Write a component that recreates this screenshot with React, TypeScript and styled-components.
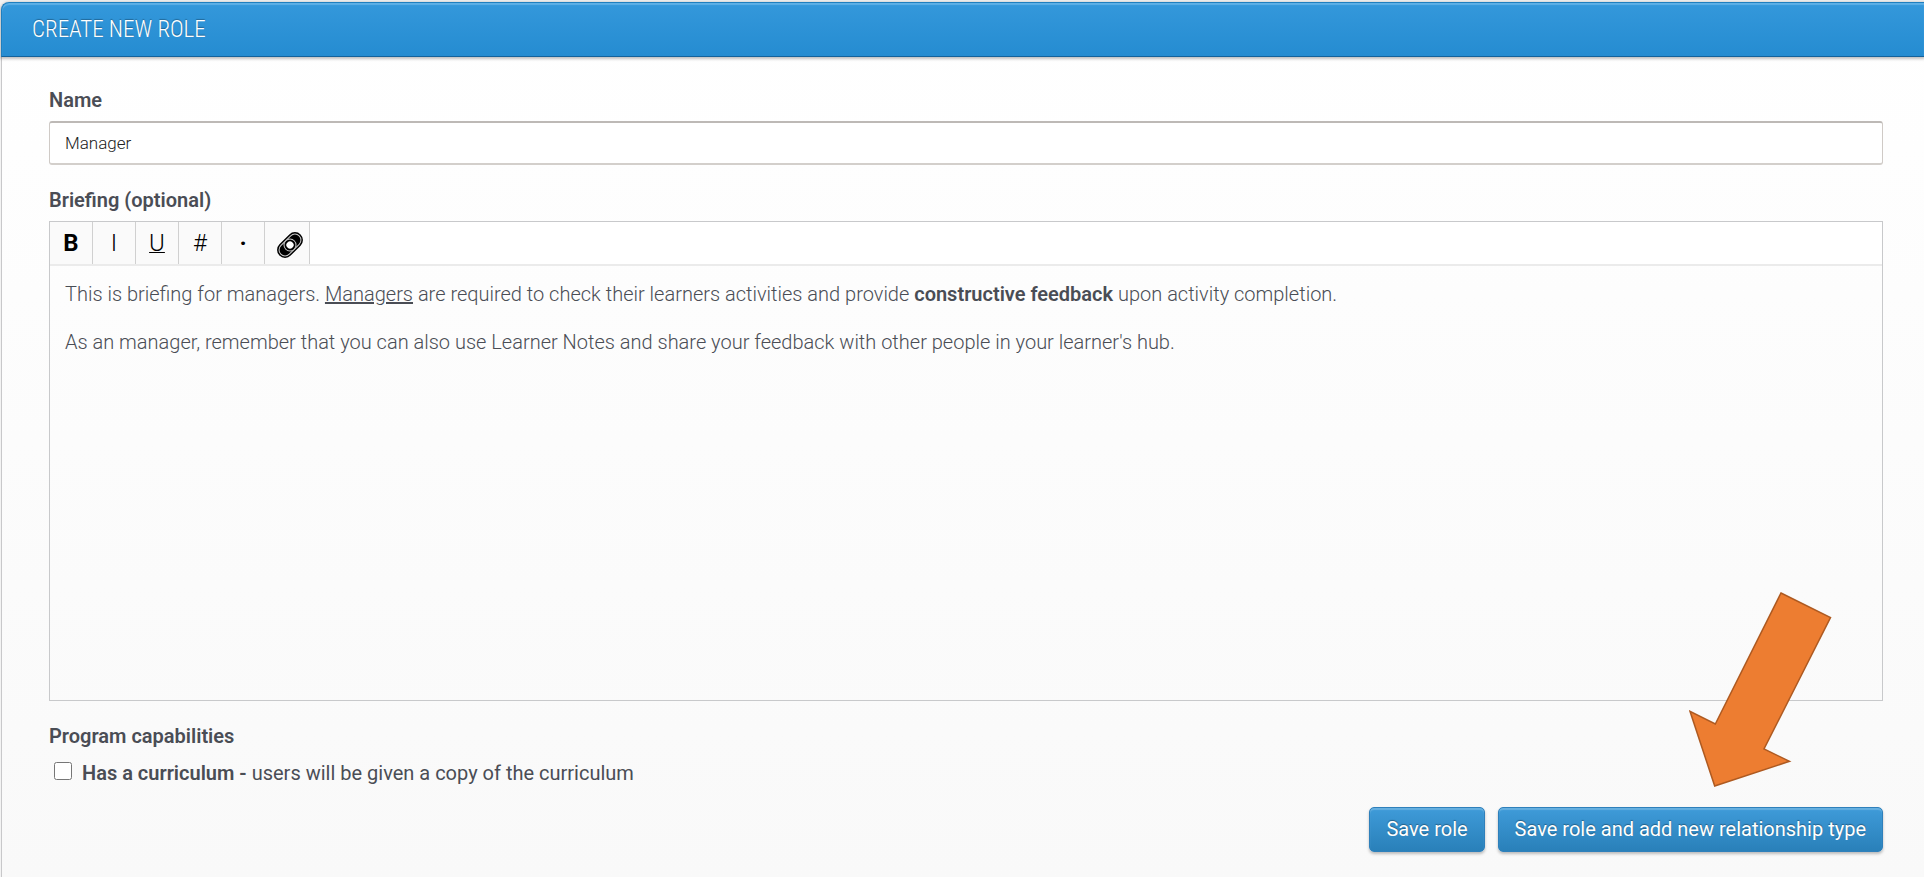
import React from 'react';
import styled, { createGlobalStyle } from 'styled-components';

const GlobalStyle = createGlobalStyle`
  * { box-sizing: border-box; }
  body {
    margin: 0;
    background: #f3f3f3;
    color: #4a4d55;
    font: 300 20px/24px Roboto, "Liberation Sans", sans-serif;
  }
`;

const Panel = styled.section`
  min-height: calc(100vh - 2px);
  margin: 2px 0 0 1px;
  border-left: 1px solid #c8c8ca;
  border-top-left-radius: 8px;
  background: linear-gradient(#ffffff, #f9f9f9);
`;

const PanelHeader = styled.header`
  height: 55px;
  margin-left: -1px;
  padding: 0 30px;
  display: flex;
  align-items: center;
  border: 1px solid #1f7fc0;
  border-bottom-color: #14629b;
  border-right: 0;
  border-top-left-radius: 8px;
  background: linear-gradient(#3498db, #258cd1);
  box-shadow: inset 0 2px 1px #5eb0e6, 0 1px 3px 1px rgba(0, 0, 0, 0.25);
`;

const Title = styled.h1`
  margin: 0;
  color: #fff;
  font: 300 23px/28px "Roboto Condensed", Roboto, sans-serif;
  text-transform: uppercase;
  text-shadow: 0 -1px 1px rgba(0, 0, 0, 0.3);
`;

const Form = styled.form`
  display: flex;
  flex-direction: column;
  padding: 31px 41px 26px 47px;
`;

const FieldLabel = styled.label`
  margin-bottom: 9px;
  font-weight: 600;
`;

const TextInput = styled.input`
  height: 44px;
  margin-bottom: 23px;
  padding: 0 15px;
  border: 1px solid #cfcac6;
  border-top: 2px solid #bdb9b6;
  border-bottom: 2px solid #d3cfcb;
  border-radius: 3px;
  background: #fff;
  color: #222;
  font: 300 17px/24px Roboto, sans-serif;
`;

const Editor = styled.div`
  border: 1px solid #c8c9cb;
  margin-bottom: 23px;
`;

const Toolbar = styled.div`
  display: flex;
  height: 44px;
  background: #fff;
  border-bottom: 2px solid #ebebeb;
`;

const ToolButton = styled.button<{ $bold?: boolean; $underline?: boolean; $icon?: boolean }>`
  width: ${p => (p.$icon ? 45 : 43)}px;
  padding: ${p => (p.$icon ? '4px 0 0 6px' : '0')};
  display: flex;
  align-items: center;
  justify-content: center;
  border: 0;
  border-right: 1px solid #d0d0d0;
  background: #fafafa;
  color: #000;
  font: ${p => (p.$bold ? 700 : 300)} 24px/28px Roboto, sans-serif;
  text-decoration: ${p => (p.$underline ? 'underline 1px' : 'none')};
`;

const EditorBody = styled.div`
  min-height: 434px;
  padding: 16px 15px;
`;

const Paragraph = styled.p`
  margin: 0 0 24px;
`;

const Strong = styled.strong`
  font-weight: 600;
`;

const Group = styled.fieldset`
  margin: 0 0 22px;
  padding: 0;
  border: 0;
`;

const Legend = styled.legend`
  margin-bottom: 13px;
  padding: 0;
  font-weight: 600;
`;

const CheckRow = styled.label`
  display: flex;
  align-items: center;
  gap: 10px;
  padding-left: 5px;
  font-weight: 400;
`;

const CheckBox = styled.input`
  width: 18px;
  height: 18px;
  margin: 0 0 4px;
`;

const Actions = styled.div`
  position: relative;
  display: flex;
  justify-content: flex-end;
  gap: 13px;
`;

const ActionButton = styled.button`
  height: 45px;
  padding: 0 16px 2px;
  border: 1px solid #2f80bb;
  border-radius: 5px;
  background: linear-gradient(#3f9bd9, #2980b9);
  box-shadow: inset 0 2px 1px #66b0e0, 0 2px 3px rgba(0, 0, 0, 0.25);
  color: #fff;
  font: 400 20px/24px Roboto, sans-serif;
  text-shadow: 0 -1px 1px rgba(0, 0, 0, 0.35);
`;

const Arrow = styled.svg`
  position: absolute;
  right: 51px;
  bottom: 64px;
  width: 143px;
  height: 197px;
  pointer-events: none;
`;

const LinkIcon = () => (
  <svg width="28" height="28" viewBox="0 0 28 28" aria-hidden="true">
    <g transform="rotate(-45 14 14)" fill="none">
      <rect x="-1" y="6" width="30" height="16" rx="8" fill="#000" />
      <rect x="1" y="8" width="26" height="12" rx="6" stroke="#ccc" strokeWidth="1" />
      <circle cx="14" cy="14" r="6" fill="#000" stroke="#ccc" strokeWidth="1" />
      <circle cx="14" cy="14" r="3.6" fill="#fff" />
    </g>
  </svg>
);

export default function App() {
  return (
    <>
      <GlobalStyle />
      <Panel>
        <PanelHeader>
          <Title>Create new role</Title>
        </PanelHeader>
        <Form onSubmit={e => e.preventDefault()}>
          <FieldLabel htmlFor="name">Name</FieldLabel>
          <TextInput id="name" defaultValue="Manager" />
          <FieldLabel as="div" id="briefing-label">Briefing (optional)</FieldLabel>
          <Editor>
            <Toolbar role="toolbar">
              <ToolButton type="button" $bold>B</ToolButton>
              <ToolButton type="button">I</ToolButton>
              <ToolButton type="button" $underline>U</ToolButton>
              <ToolButton type="button">#</ToolButton>
              <ToolButton type="button" $bold>·</ToolButton>
              <ToolButton type="button" $icon aria-label="Link"><LinkIcon /></ToolButton>
            </Toolbar>
            <EditorBody contentEditable suppressContentEditableWarning spellCheck={false} role="textbox" aria-multiline="true" aria-labelledby="briefing-label">
              <Paragraph>
                This is briefing for managers. <u>Managers</u> are required to check their learners activities and provide <Strong>constructive feedback</Strong> upon activity completion.
              </Paragraph>
              <Paragraph>
                As an manager, remember that you can also use Learner Notes and share your feedback with other people in your learner's hub.
              </Paragraph>
            </EditorBody>
          </Editor>
          <Group>
            <Legend>Program capabilities</Legend>
            <CheckRow>
              <CheckBox type="checkbox" />
              <span><Strong>Has a curriculum -</Strong> users will be given a copy of the curriculum</span>
            </CheckRow>
          </Group>
          <Actions>
            <ActionButton type="submit">Save role</ActionButton>
            <ActionButton type="button">Save role and add new relationship type</ActionButton>
            <Arrow viewBox="1689 590 143 197" aria-hidden="true">
              <path d="M1781 592 1830.5 616.7 1764 748 1789.5 760.3 1714.7 785 1690 710.3 1715.3 723Z" fill="#ed7d31" stroke="#ae5a21" strokeWidth="1.5" />
            </Arrow>
          </Actions>
        </Form>
      </Panel>
    </>
  );
}
